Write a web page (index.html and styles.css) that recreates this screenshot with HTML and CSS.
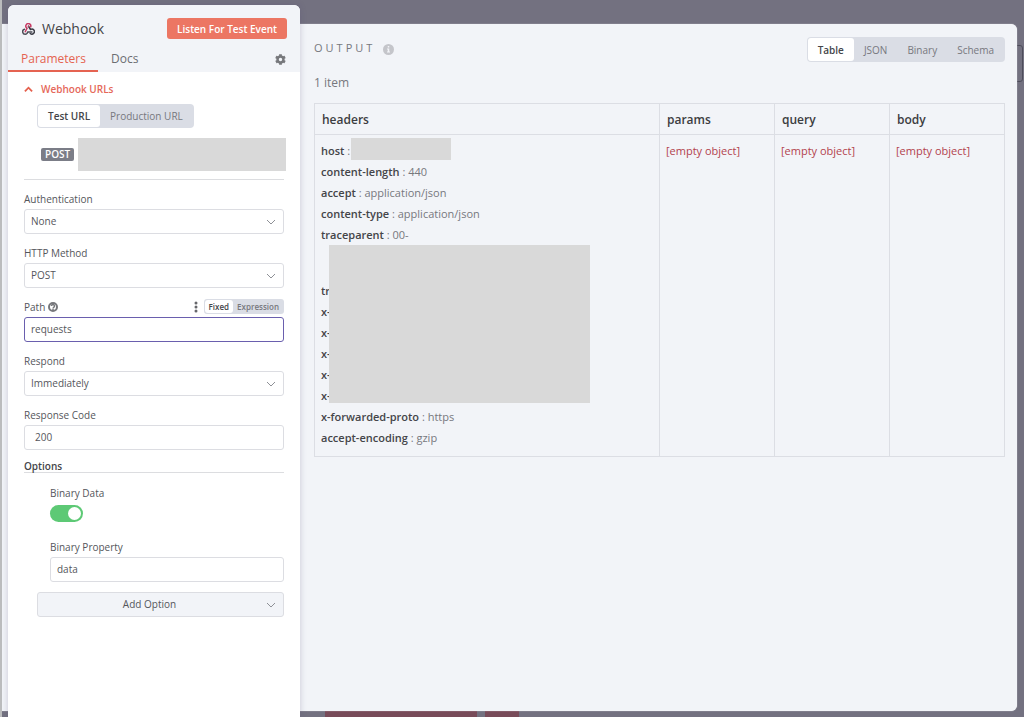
FILE: index.html
```html
<!DOCTYPE html>
<html lang="en">
<head>
    <meta charset="UTF-8">
    <meta name="viewport" content="width=device-width, initial-scale=1.0">
    <title>Webhook</title>
    <link rel="stylesheet" href="styles.css">
</head>
<body>
    <!-- Canvas nodes that show from behind the dialog -->
    <div class="canvas-node node-outline"></div>
    <div class="canvas-node node-red-wide"></div>
    <div class="canvas-node node-red"></div>

    <div class="dialog">
        <aside class="node-panel">
            <header class="panel-header">
                <div class="title-row">
                    <svg class="node-icon" viewBox="0 0 26 24" fill="none" stroke-width="3" stroke-linecap="round" stroke-linejoin="round">
                        <path stroke="#c73a63" d="M17.5 7.5a5 5 0 1 0-7.3 3L6.5 17.5"/>
                        <path stroke="#3c3c46" d="M13 6.5l4 6.5a5 5 0 1 1-.5 8"/>
                        <path stroke="#4b4b55" d="M5 12.5a5 5 0 1 0 6.3 5.5h8.5"/>
                        <circle cx="13" cy="6.5" r="1" fill="#c73a63" stroke="#c73a63" stroke-width="1"/>
                    </svg>
                    <h1>Webhook</h1>
                    <button class="listen-btn" type="button">Listen For Test Event</button>
                </div>
                <nav class="tabs">
                    <a class="tab active" href="#parameters">Parameters</a>
                    <a class="tab" href="#docs">Docs</a>
                    <button class="icon-btn gear" type="button" aria-label="Settings">
                        <svg viewBox="0 0 512 512" fill="#77787c"><path d="M487 316l-43-25c4-23 4-47 0-70l43-25c5-3 7-9 6-14-11-36-30-69-55-96-4-4-10-5-15-2l-43 25c-18-16-39-28-61-36V24c0-6-4-11-9-12-37-8-75-8-110 0-6 1-10 6-10 12v49c-22 8-43 20-61 36L87 84c-5-3-11-2-15 2-25 27-44 60-55 96-2 5 1 11 6 14l43 25c-4 23-4 47 0 70l-43 25c-5 3-7 9-6 14 11 36 30 69 55 96 4 4 10 5 15 2l43-25c18 16 39 28 61 36v49c0 6 4 11 9 12 37 8 75 8 110 0 6-1 10-6 10-12v-49c22-8 43-20 61-36l43 25c5 3 11 2 15-2 25-27 44-60 55-96 1-5-2-11-7-14zM256 336a80 80 0 1 1 0-160 80 80 0 0 1 0 160z" fill-rule="evenodd"/></svg>
                    </button>
                </nav>
            </header>

            <form class="panel-body">
                <section class="webhook-urls">
                    <button class="collapse-btn" type="button">
                        <svg viewBox="0 0 10 10" fill="none" stroke="#e5604d" stroke-width="2"><path d="M1 7l4-4 4 4"/></svg>
                        Webhook URLs
                    </button>
                    <div class="segmented url-switch">
                        <button class="selected" type="button">Test URL</button>
                        <button type="button">Production URL</button>
                    </div>
                    <div class="url-row">
                        <span class="method">POST</span>
                        <span class="redacted url-value"></span>
                    </div>
                </section>

                <div class="field">
                    <div class="label-row"><label for="auth">Authentication</label></div>
                    <select id="auth"><option>None</option></select>
                </div>
                <div class="field">
                    <div class="label-row"><label for="method">HTTP Method</label></div>
                    <select id="method"><option>POST</option></select>
                </div>
                <div class="field">
                    <div class="label-row">
                        <label for="path">Path</label>
                        <svg class="help" viewBox="0 0 20 20" fill="none" stroke="#77787c"><circle cx="10" cy="10" r="8" stroke-width="4"/><path d="M7 8a3 3 0 1 1 4 3l-1 1" stroke-width="3"/><path d="M10 13v3" stroke-width="3"/></svg>
                        <button class="icon-btn dots" type="button" aria-label="More">
                            <svg viewBox="0 0 8 24" fill="#66676b"><circle cx="4" cy="4" r="3"/><circle cx="4" cy="12" r="3"/><circle cx="4" cy="20" r="3"/></svg>
                        </button>
                        <div class="segmented small">
                            <button class="selected" type="button">Fixed</button>
                            <button type="button">Expression</button>
                        </div>
                    </div>
                    <input class="focused" id="path" type="text" value="requests">
                </div>
                <div class="field">
                    <div class="label-row"><label for="respond">Respond</label></div>
                    <select id="respond"><option>Immediately</option></select>
                </div>
                <div class="field">
                    <div class="label-row"><label for="code">Response Code</label></div>
                    <input class="number" id="code" type="text" inputmode="numeric" value="200">
                </div>

                <h2>Options</h2>
                <div class="options">
                    <div class="field">
                        <div class="label-row"><label for="binary">Binary Data</label></div>
                        <input class="switch" id="binary" type="checkbox" checked>
                    </div>
                    <div class="field">
                        <div class="label-row"><label for="property">Binary Property</label></div>
                        <input id="property" type="text" value="data">
                    </div>
                </div>
                <select class="add-option" aria-label="Add Option"><option>Add Option</option></select>
            </form>
        </aside>

        <main class="output">
            <header class="output-header">
                <h2>OUTPUT</h2>
                <svg class="info" viewBox="0 0 22 22"><circle cx="11" cy="11" r="11" fill="#c4c5ca"/><path d="M9.500 4h3v3h-3zM8 9h4.500v6H14v2H8v-2h1.500v-4H8z" fill="#f2f4f8"/></svg>
                <div class="segmented view-switch">
                    <button class="selected" type="button">Table</button>
                    <button type="button">JSON</button>
                    <button type="button">Binary</button>
                    <button type="button">Schema</button>
                </div>
            </header>
            <p class="count">1 item</p>
            <table>
                <thead>
                    <tr><th class="wide">headers</th><th>params</th><th>query</th><th>body</th></tr>
                </thead>
                <tbody>
                    <tr>
                        <td>
                            <ul class="header-list">
                                <li><b>host</b> :<span class="redacted host-value"></span></li>
                                <li><b>content-length</b> : 440</li>
                                <li><b>accept</b> : application/json</li>
                                <li><b>content-type</b> : application/json</li>
                                <li class="wrapped"><b>traceparent</b> : 00-<span class="redacted block"></span></li>
                                <li><b>tr</b></li>
                                <li><b>x-</b></li>
                                <li><b>x-</b></li>
                                <li><b>x-</b></li>
                                <li><b>x-</b></li>
                                <li><b>x-</b></li>
                                <li><b>x-forwarded-proto</b> : https</li>
                                <li><b>accept-encoding</b> : gzip</li>
                            </ul>
                        </td>
                        <td class="empty">[empty object]</td>
                        <td class="empty">[empty object]</td>
                        <td class="empty">[empty object]</td>
                    </tr>
                </tbody>
            </table>
        </main>
    </div>
</body>
</html>
```

FILE: styles.css
```css
* {
    margin: 0;
    padding: 0;
    box-sizing: border-box;
    font-family: "Open Sans", sans-serif;
}
body {
    position: relative;
    display: flex;
    min-height: 100vh;
    overflow: hidden;
    background: #737180;
    border-left: 2px solid #bbbcbd;
    color: #55565b;
    font-size: 10px;
}
button {
    border: none;
    background: none;
    cursor: pointer;
}
svg {
    display: block;
}

/* Canvas behind the dialog */
.canvas-node {
    position: absolute;
}
.node-outline {
    top: 45px;
    right: 1px;
    width: 30px;
    height: 37px;
    border: 1px solid #4e4d5b;
    border-radius: 3px;
}
.node-red-wide,
.node-red {
    bottom: 0;
    height: 12px;
    background: #784b59;
}
.node-red-wide {
    left: 323px;
    width: 152px;
}
.node-red {
    left: 483px;
    width: 34px;
}

.dialog {
    position: relative;
    flex: 1;
    display: flex;
    margin: 24px 7px 6px 0;
    background: #f2f4f8;
    border-radius: 0 6px 6px 0;
    box-shadow: 0 0 1px #fff;
}

/* Left panel */
.node-panel {
    flex: 0 0 292px;
    margin: -19px 0 -6px 6px;
    background: #fff;
    border-radius: 6px 6px 0 0;
    box-shadow: 0 0 6px rgba(80, 70, 110, 0.25);
}
.panel-header {
    background: #f2f4f8;
    border-radius: 6px 6px 0 0;
}
.title-row {
    display: flex;
    align-items: center;
    height: 42px;
    padding: 5px 13px 0 14px;
}
.node-icon {
    width: 13px;
    height: 12px;
}
.title-row h1 {
    flex: 1;
    margin-left: 7px;
    font-size: 14px;
    font-weight: 500;
    color: #444549;
}
.listen-btn {
    height: 21px;
    padding: 0 10px;
    background: #ec7663;
    border-radius: 3px;
    color: #fff;
    font-size: 10px;
    font-weight: 600;
}
.tabs {
    display: flex;
    align-items: center;
    height: 25px;
    padding-right: 14px;
}
.tab {
    height: 25px;
    padding: 0 12px 0 13px;
    line-height: 24px;
    color: #6c6d72;
    font-size: 12px;
    font-weight: 500;
    text-decoration: none;
}
.tab.active {
    border-bottom: 2px solid #e56351;
    color: #e56351;
}
.gear {
    width: 11px;
    margin-left: auto;
}
.panel-body {
    padding: 9px 16px;
}
.webhook-urls {
    margin-bottom: 10px;
    padding-bottom: 8px;
    border-bottom: 1px solid #dcdde0;
}
.collapse-btn {
    display: flex;
    align-items: center;
    gap: 8px;
    height: 16px;
    color: #e5685a;
    font-size: 10px;
    font-weight: 600;
}
.collapse-btn svg {
    width: 9px;
    height: 9px;
}

.segmented {
    display: inline-flex;
    padding: 1px;
    background: #dadde5;
    border-radius: 4px;
}
.segmented button {
    padding: 0 10px;
    border-radius: 3px;
    color: #77787e;
    font-size: 10px;
    font-weight: 500;
}
.segmented .selected {
    background: #fff;
    color: #444549;
    font-weight: 600;
}
.url-switch {
    height: 24px;
    margin: 7px 0 0 13px;
}
.url-row {
    display: flex;
    align-items: center;
    gap: 4px;
    margin: 10px -2px 0 17px;
}
.method {
    padding: 0 4px;
    background: #7b7d87;
    border-radius: 2px;
    color: #fff;
    font-size: 10px;
    font-weight: 600;
    line-height: 13px;
}
.redacted {
    background: #d9d9d9;
}
.url-value {
    flex: 1;
    height: 33px;
}

.field {
    margin-bottom: 10px;
}
.label-row {
    display: flex;
    align-items: center;
    height: 19px;
    padding-bottom: 2px;
}
.field input,
.field select,
.add-option {
    display: block;
    width: 100%;
    height: 25px;
    padding: 0 7px;
    background-color: #fff;
    border: 1px solid #dcdde2;
    border-radius: 3px;
    outline: none;
    color: #55565b;
    font-size: 10px;
}
.field input,
.field select {
    padding-left: 6px;
    padding-bottom: 1px;
}
.field select,
.add-option {
    appearance: none;
    background-image: url("data:image/svg+xml,%3Csvg xmlns='http://www.w3.org/2000/svg' viewBox='0 0 10 6' fill='none' stroke='%238e9096'%3E%3Cpath d='M1 1l4 4 4-4'/%3E%3C/svg%3E");
    background-repeat: no-repeat;
    background-position: right 7px center;
    background-size: 10px 6px;
}
.field .focused {
    border-color: #6a5fae;
}
.field .number {
    padding-left: 10px;
}
.help {
    width: 10px;
    height: 10px;
    margin-left: 3px;
}
.dots {
    width: 4px;
    margin: 0 6px 0 auto;
}
.small {
    height: 15px;
    border-radius: 3px;
}
.small button {
    padding: 0 4px;
    font-size: 8px;
    font-weight: 600;
}
.panel-body h2 {
    height: 13px;
    border-bottom: 1px solid #dcdde0;
    color: #444549;
    font-size: 10px;
    font-weight: 600;
    line-height: 12px;
}
.options {
    padding: 11px 0 0 26px;
}
.field .switch {
    appearance: none;
    position: relative;
    width: 33px;
    height: 17px;
    margin: 2px 0 16px;
    background: #5dc975;
    border: none;
    border-radius: 9px;
}
.field .switch::after {
    content: "";
    position: absolute;
    top: 2px;
    right: 2px;
    width: 13px;
    height: 13px;
    background: #fff;
    border-radius: 50%;
}
.add-option {
    width: auto;
    min-width: calc(100% - 13px);
    margin-left: 13px;
    padding: 0 29px 1px 7px;
    background-color: #f2f4f8;
    text-align: center;
    text-align-last: center;
}

/* Output panel */
.output {
    flex: 1;
    min-width: 0;
    padding: 13px 12px 20px 14px;
}
.output-header {
    display: flex;
    align-items: center;
    height: 25px;
}
.output-header h2 {
    padding-bottom: 4px;
    color: #77787e;
    font-size: 11px;
    font-weight: 500;
    letter-spacing: 3px;
}
.info {
    width: 11px;
    height: 11px;
    margin-left: 8px;
}
.view-switch {
    height: 25px;
    margin-left: auto;
}
.count {
    margin: 12px 0;
    font-size: 12px;
    line-height: 17px;
    color: #77787e;
}
table {
    width: 100%;
    table-layout: fixed;
    border-collapse: collapse;
    font-size: 11px;
}
th,
td {
    border: 1px solid #dcdee4;
    text-align: left;
    vertical-align: top;
}
th {
    height: 31px;
    padding: 0 7px;
    vertical-align: middle;
    color: #3c3d41;
    font-size: 12px;
    font-weight: 600;
}
.wide {
    width: 50%;
}
td {
    padding: 7px 6px 6px;
    color: #77787e;
    line-height: 17px;
}
.empty {
    color: #b2424d;
    white-space: nowrap;
}
.header-list {
    list-style: none;
}
.header-list li {
    position: relative;
    height: 21px;
    white-space: nowrap;
}
.header-list b {
    color: #444549;
    font-weight: 600;
}
.header-list .wrapped {
    height: 56px;
}
.host-value {
    position: absolute;
    top: -4px;
    left: 30px;
    width: 100px;
    height: 22px;
}
.block {
    position: absolute;
    z-index: 1;
    top: 19px;
    left: 8px;
    width: 261px;
    height: 158px;
}
```
